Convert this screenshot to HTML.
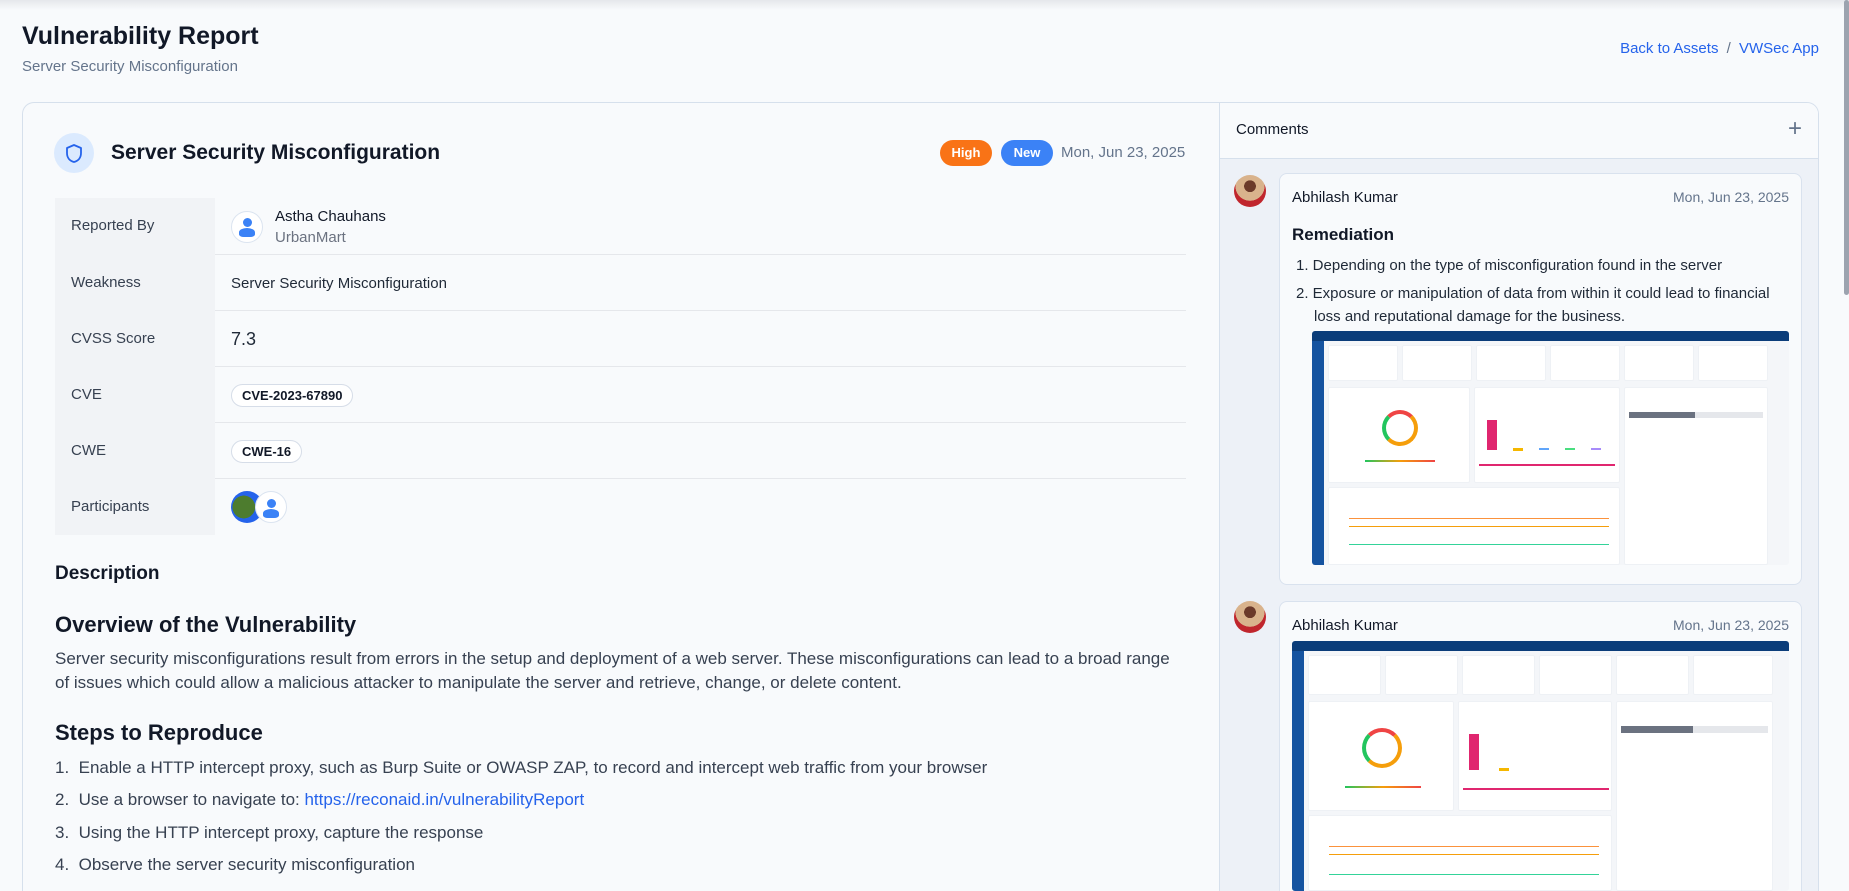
<!DOCTYPE html>
<html style="height:891px;overflow:hidden"><head><meta charset="utf-8"><style>
*{box-sizing:border-box;margin:0;padding:0}
body{width:1849px;height:891px;overflow:hidden;background:#f8fafc;font-family:"Liberation Sans",sans-serif;color:#111827;position:relative}
.abs{position:absolute}
.topsh{position:absolute;left:0;top:0;width:1849px;height:10px;background:linear-gradient(#e5e7eb,#f8fafc)}
.card{position:absolute;left:22px;top:102px;width:1797px;height:789px;border:1px solid #d6e0ec;border-bottom:none;border-radius:12px 12px 0 0;background:#f8fafc;overflow:hidden}
.right{position:absolute;left:1196px;top:0;width:601px;height:100%;border-left:1px solid #d6e0ec;background:#edf1f7}
.rh{height:56px;background:#f8fafc;border-bottom:1px solid #d6e0ec;position:relative}
.row{position:absolute;left:55px;width:1131px;height:56px;border-bottom:1px solid #e5e7eb}
.lab{position:absolute;left:0;top:0;width:160px;height:56px;background:#f1f3f6;padding-left:16px;line-height:56px;font-size:15px;color:#374151}
.val{position:absolute;left:176px;top:0;height:56px;display:flex;align-items:center;font-size:15px;color:#1f2937}
.pill{border:1px solid #d6dde8;border-radius:14px;padding:3px 10px;font-size:13px;font-weight:bold;color:#111827;background:#fff}
.badge{position:absolute;top:140px;height:26px;border-radius:13px;color:#fff;font-size:13px;font-weight:bold;line-height:26px;text-align:center}
.cc{position:absolute;left:1279px;width:523px;background:#f8fafc;border:1px solid #d9e2ee;border-radius:8px}
.av{position:absolute;width:32px;height:32px;border-radius:50%;background:radial-gradient(circle at 50% 35%,#6b3a2a 0 22%,#d9b38c 23% 55%,#c0262d 56%)}
.uav{border-radius:50%;background:#fff;border:1px solid #dbe4f0;position:relative}
.uav:before{content:"";position:absolute;left:50%;top:22%;width:30%;height:30%;margin-left:-15%;border-radius:50%;background:#3b82f6}
.uav:after{content:"";position:absolute;left:50%;top:55%;width:56%;height:30%;margin-left:-28%;border-radius:50% 50% 30% 30%;background:#3b82f6}
.ol{font-size:17px;color:#374151}
.dash{position:absolute;background:#fff;overflow:hidden;border-radius:3px}
.dtop{position:absolute;left:0;top:0;right:0;height:10px;background:#0b3d7a}
.dside{position:absolute;left:0;top:10px;bottom:0;width:12px;background:#1553a0}
.tile{position:absolute;background:#fff;border:1px solid #eef1f5;border-radius:2px}
</style></head><body>
<div class="topsh"></div>
<div class="abs" style="left:22px;top:22px;font-size:25px;font-weight:bold;color:#111827">Vulnerability Report</div>
<div class="abs" style="left:22px;top:58px;font-size:15px;color:#64748b">Server Security Misconfiguration</div>
<div class="abs" style="right:30px;top:40px;font-size:15px;color:#2563eb">Back to Assets <span style="color:#64748b;margin:0 4px">/</span> VWSec App</div>
<div class="abs" style="right:0;top:0;width:5px;height:295px;background:#9ca3af;border-radius:3px"></div>

<div class="card">
 <div class="right">
  <div class="rh"><span class="abs" style="left:16px;top:18px;font-size:15px;color:#111827">Comments</span><span class="abs" style="right:18px;top:12px;font-size:24px;color:#64748b;font-weight:300">+</span></div>
 </div>
</div>

<div class="abs" style="left:54px;top:133px;width:40px;height:40px;border-radius:50%;background:#dbeafe"><svg width="40" height="40" viewBox="0 0 40 40"><path d="M20 12l7 3v5c0 5-3 8-7 9-4-1-7-4-7-9v-5z" fill="none" stroke="#2563eb" stroke-width="1.8" stroke-linejoin="round"/></svg></div>
<div class="abs" style="left:111px;top:141px;font-size:21px;font-weight:bold;color:#111827">Server Security Misconfiguration</div>
<div class="badge" style="left:940px;width:52px;background:#f97316">High</div>
<div class="badge" style="left:1001px;width:52px;background:#3b82f6">New</div>
<div class="abs" style="left:1061px;top:144px;font-size:15px;color:#64748b">Mon, Jun 23, 2025</div>

<div class="row" style="top:198px;height:57px"><div class="lab" style="height:57px">Reported By</div><div class="val" style="height:57px"><div class="uav" style="width:32px;height:32px"></div><div style="margin-left:12px;line-height:21px"><div style="font-size:15px;color:#111827">Astha Chauhans</div><div style="font-size:15px;color:#6b7280">UrbanMart</div></div></div></div>
<div class="row" style="top:255px"><div class="lab">Weakness</div><div class="val">Server Security Misconfiguration</div></div>
<div class="row" style="top:311px"><div class="lab">CVSS Score</div><div class="val" style="font-size:18px">7.3</div></div>
<div class="row" style="top:367px"><div class="lab">CVE</div><div class="val"><span class="pill">CVE-2023-67890</span></div></div>
<div class="row" style="top:423px"><div class="lab">CWE</div><div class="val"><span class="pill">CWE-16</span></div></div>
<div class="row" style="top:479px;border-bottom:none"><div class="lab">Participants</div><div class="val"><div style="width:32px;height:32px;border-radius:50%;background:radial-gradient(circle at 40% 50%,#4d7c2e 0 45%,#2563eb 46%)"></div><div class="uav" style="width:32px;height:32px;margin-left:-8px"></div></div></div>

<div class="abs" style="left:55px;top:563px;font-size:19px;font-weight:bold">Description</div>
<div class="abs" style="left:55px;top:612px;font-size:22px;font-weight:600;color:#111827">Overview of the Vulnerability</div>
<div class="abs ol" style="left:55px;top:647px;width:1120px;line-height:24px">Server security misconfigurations result from errors in the setup and deployment of a web server. These misconfigurations can lead to a broad range of issues which could allow a malicious attacker to manipulate the server and retrieve, change, or delete content.</div>
<div class="abs" style="left:55px;top:720px;font-size:22px;font-weight:600">Steps to Reproduce</div>
<div class="abs ol" style="left:55px;top:752px;line-height:32.4px">
<div>1.&nbsp;&nbsp;Enable a HTTP intercept proxy, such as Burp Suite or OWASP ZAP, to record and intercept web traffic from your browser</div>
<div>2.&nbsp;&nbsp;Use a browser to navigate to: <span style="color:#2563eb">https://reconaid.in/vulnerabilityReport</span></div>
<div>3.&nbsp;&nbsp;Using the HTTP intercept proxy, capture the response</div>
<div>4.&nbsp;&nbsp;Observe the server security misconfiguration</div>
</div>

<div class="av" style="left:1234px;top:175px"></div>
<div class="cc" style="top:173px;height:412px">
 <div class="abs" style="left:12px;top:15px;font-size:15px">Abhilash Kumar</div>
 <div class="abs" style="right:12px;top:15px;font-size:14px;color:#64748b">Mon, Jun 23, 2025</div>
 <div class="abs" style="left:12px;top:51px;font-size:17px;font-weight:bold">Remediation</div>
 <div class="abs" style="left:16px;top:80px;font-size:15px;color:#1f2937;line-height:23px;width:490px">
  <div style="padding-left:18px;text-indent:-18px;margin-bottom:5px">1. Depending on the type of misconfiguration found in the server</div>
  <div style="padding-left:18px;text-indent:-18px">2. Exposure or manipulation of data from within it could lead to financial loss and reputational damage for the business.</div>
 </div>
</div>
<div class="av" style="left:1234px;top:601px"></div>
<div class="cc" style="top:601px;height:320px">
 <div class="abs" style="left:12px;top:15px;font-size:15px">Abhilash Kumar</div>
 <div class="abs" style="right:12px;top:15px;font-size:14px;color:#64748b">Mon, Jun 23, 2025</div>
</div>

<div class="dash" style="left:1312px;top:331px;width:477px;height:234px;background:#f4f6f9">
 <div class="dtop"></div><div class="dside"></div>
 <div class="tile" style="left:16px;top:14px;width:70px;height:36px"></div><div class="tile" style="left:90px;top:14px;width:70px;height:36px"></div><div class="tile" style="left:164px;top:14px;width:70px;height:36px"></div><div class="tile" style="left:238px;top:14px;width:70px;height:36px"></div><div class="tile" style="left:312px;top:14px;width:70px;height:36px"></div><div class="tile" style="left:386px;top:14px;width:70px;height:36px"></div>
 <div class="tile" style="left:16px;top:56px;width:142px;height:96px"><div class="abs" style="left:53px;top:22px;width:36px;height:36px;border-radius:50%;border:4px solid #f59e0b;border-left-color:#22c55e;border-top-color:#ef4444"></div><div class="abs" style="left:36px;top:72px;width:70px;height:2px;background:linear-gradient(90deg,#22c55e,#f59e0b,#ef4444)"></div></div>
 <div class="tile" style="left:162px;top:56px;width:146px;height:96px"><div class="abs" style="left:12px;top:32px;width:10px;height:30px;background:#e0266f"></div><div class="abs" style="left:38px;top:60px;width:10px;height:3px;background:#f5b700"></div><div class="abs" style="left:64px;top:60px;width:10px;height:2px;background:#60a5fa"></div><div class="abs" style="left:90px;top:60px;width:10px;height:2px;background:#4ade80"></div><div class="abs" style="left:116px;top:60px;width:10px;height:2px;background:#a78bfa"></div><div class="abs" style="left:4px;top:76px;width:136px;height:2px;background:#e0266f"></div></div>
 <div class="tile" style="left:312px;top:56px;width:144px;height:178px"><div class="abs" style="left:4px;top:24px;width:134px;height:6px;background:#e5e7eb"></div><div class="abs" style="left:4px;top:24px;width:66px;height:6px;background:#6b7280"></div></div>
 <div class="tile" style="left:16px;top:156px;width:292px;height:78px"><div class="abs" style="left:20px;top:30px;width:260px;height:1px;background:#fb923c"></div><div class="abs" style="left:20px;top:38px;width:260px;height:1px;background:#f59e0b"></div><div class="abs" style="left:20px;top:56px;width:260px;height:1px;background:#34d399"></div></div>
</div>
<div class="dash" style="left:1292px;top:641px;width:497px;height:250px;background:#f4f6f9">
 <div class="dtop"></div><div class="dside"></div>
 <div class="tile" style="left:16px;top:14px;width:73px;height:40px"></div><div class="tile" style="left:93px;top:14px;width:73px;height:40px"></div><div class="tile" style="left:170px;top:14px;width:73px;height:40px"></div><div class="tile" style="left:247px;top:14px;width:73px;height:40px"></div><div class="tile" style="left:324px;top:14px;width:73px;height:40px"></div><div class="tile" style="left:401px;top:14px;width:80px;height:40px"></div>
 <div class="tile" style="left:16px;top:60px;width:146px;height:110px"><div class="abs" style="left:53px;top:26px;width:40px;height:40px;border-radius:50%;border:4px solid #f59e0b;border-left-color:#22c55e;border-top-color:#ef4444"></div><div class="abs" style="left:36px;top:84px;width:76px;height:2px;background:linear-gradient(90deg,#22c55e,#f59e0b,#ef4444)"></div></div>
 <div class="tile" style="left:166px;top:60px;width:154px;height:110px"><div class="abs" style="left:10px;top:32px;width:10px;height:36px;background:#e0266f"></div><div class="abs" style="left:40px;top:66px;width:10px;height:3px;background:#f5b700"></div><div class="abs" style="left:4px;top:86px;width:146px;height:2px;background:#e0266f"></div></div>
 <div class="tile" style="left:324px;top:60px;width:157px;height:190px"><div class="abs" style="left:4px;top:24px;width:147px;height:7px;background:#e5e7eb"></div><div class="abs" style="left:4px;top:24px;width:72px;height:7px;background:#6b7280"></div></div>
 <div class="tile" style="left:16px;top:174px;width:304px;height:76px"><div class="abs" style="left:20px;top:30px;width:270px;height:1px;background:#fb923c"></div><div class="abs" style="left:20px;top:38px;width:270px;height:1px;background:#f59e0b"></div><div class="abs" style="left:20px;top:58px;width:270px;height:1px;background:#34d399"></div></div>
</div>
</body></html>
